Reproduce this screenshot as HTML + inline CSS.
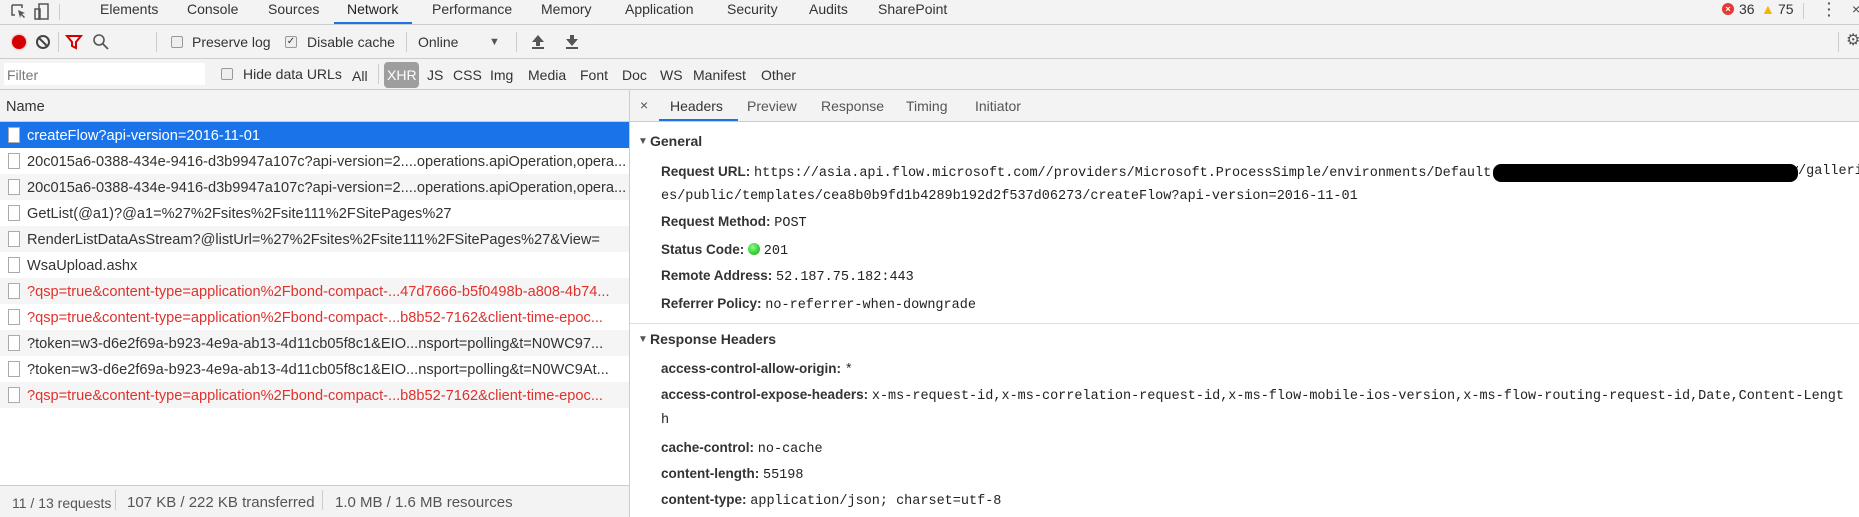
<!DOCTYPE html>
<html><head><meta charset="utf-8"><style>
*{margin:0;padding:0;box-sizing:border-box}
body{width:1859px;height:517px;overflow:hidden;background:#fff;font-family:"Liberation Sans",sans-serif;font-size:14px;color:#333;position:relative}
.a{position:absolute;white-space:nowrap;line-height:18px}
.bar{position:absolute;left:0;width:1859px;background:#f3f3f3}
.hl{position:absolute;height:1px;background:#ccc}
.vl{position:absolute;width:1px;background:#ccc}
.cb{position:absolute;width:12px;height:12px;border:1px solid #999;border-radius:2px;background:#eee}
.row{position:absolute;left:0;width:629px;height:26px;font-size:14.6px}
.row .f{position:absolute;left:8px;top:5px;width:12px;height:16px;border:1px solid #aaa;background:#fff}
.row .t{position:absolute;left:27px;top:5px;line-height:18px;white-space:nowrap}
.red{color:#e0312d}
.k{position:absolute;left:661px;font-weight:bold;font-size:13.5px;white-space:nowrap;line-height:18px;color:#333}
.k span{font-weight:normal;font-family:"Liberation Mono",monospace;font-size:13.5px;color:#222}
.m{font-family:"Liberation Mono",monospace;font-size:13.5px;color:#222}
</style></head><body>
<!-- top tab bar -->
<div class="bar" style="top:0;height:24px"></div>
<div class="hl" style="top:24px;left:0;width:1859px"></div>
<svg class="a" style="left:9px;top:2px" width="20" height="20" viewBox="0 0 20 20"><path d="M3 3h10v3M3 3v10h3" fill="none" stroke="#555" stroke-width="1.5"/><path d="M9 8l7 3-3 1 3 3-1 1-3-3-1 3z" fill="#555"/></svg>
<svg class="a" style="left:33px;top:2px" width="20" height="20" viewBox="0 0 20 20"><rect x="6" y="2" width="9" height="15" fill="none" stroke="#555" stroke-width="1.5"/><rect x="2" y="7" width="5" height="10" fill="none" stroke="#555" stroke-width="1.5"/></svg>
<div class="vl" style="left:59px;top:4px;height:16px"></div>
<div class="a" style="left:100px;top:0;color:#333">Elements</div>
<div class="a" style="left:187px;top:0">Console</div>
<div class="a" style="left:268px;top:0">Sources</div>
<div class="a" style="left:347px;top:0;color:#222">Network</div>
<div style="position:absolute;left:334px;top:22px;width:78px;height:2px;background:#1a73e8"></div>
<div class="a" style="left:432px;top:0">Performance</div>
<div class="a" style="left:541px;top:0">Memory</div>
<div class="a" style="left:625px;top:0">Application</div>
<div class="a" style="left:727px;top:0">Security</div>
<div class="a" style="left:809px;top:0">Audits</div>
<div class="a" style="left:878px;top:0">SharePoint</div>
<div class="a" style="left:1722px;top:3px;width:12px;height:12px;border-radius:50%;background:#e53935;color:#fff;font-size:9px;line-height:12px;text-align:center;font-weight:bold">×</div>
<div class="a" style="left:1739px;top:0">36</div>
<div class="a" style="left:1761px;top:0;color:#f4b400;font-size:14px">▲</div>
<div class="a" style="left:1778px;top:0">75</div>
<div class="vl" style="left:1803px;top:3px;height:16px"></div>
<div class="a" style="left:1827px;top:0;font-weight:bold;color:#555;line-height:6px;font-size:14px">·<br>·<br>·</div>
<div class="a" style="left:1852px;top:0;color:#444">×</div>
<!-- toolbar -->
<div class="bar" style="top:25px;height:33px"></div>
<div class="hl" style="top:58px;left:0;width:1859px"></div>
<div class="a" style="left:12px;top:35px;width:14px;height:14px;border-radius:50%;background:#d50000;box-shadow:0 0 2px #f66"></div>
<svg class="a" style="left:35px;top:34px" width="16" height="16" viewBox="0 0 16 16"><circle cx="8" cy="8" r="6" fill="none" stroke="#444" stroke-width="2"/><path d="M4 4l8 8" stroke="#444" stroke-width="2"/></svg>
<div class="vl" style="left:58px;top:32px;height:20px"></div>
<svg class="a" style="left:65px;top:33px" width="18" height="18" viewBox="0 0 18 18"><path d="M2 3h14l-5 6v6l-4 -2v-4z" fill="none" stroke="#d50000" stroke-width="2"/></svg>
<svg class="a" style="left:92px;top:33px" width="18" height="18" viewBox="0 0 18 18"><circle cx="7" cy="7" r="5" fill="none" stroke="#555" stroke-width="1.6"/><path d="M11 11l5 5" stroke="#555" stroke-width="1.8"/></svg>
<div class="vl" style="left:156px;top:32px;height:20px"></div>
<div class="cb" style="left:171px;top:36px"></div>
<div class="a" style="left:192px;top:33px">Preserve log</div>
<div class="cb" style="left:285px;top:36px;font-size:10px;line-height:10px;text-align:center;color:#333">✓</div>
<div class="a" style="left:307px;top:33px">Disable cache</div>
<div class="vl" style="left:406px;top:32px;height:20px"></div>
<div class="a" style="left:418px;top:33px">Online</div>
<div class="a" style="left:489px;top:33px;font-size:11px;color:#555">▼</div>
<div class="vl" style="left:516px;top:32px;height:20px"></div>
<svg class="a" style="left:531px;top:34px" width="14" height="16" viewBox="0 0 14 16"><path d="M7 1l6 7H9v4H5V8H1z" fill="#555"/><rect x="1" y="13" width="12" height="2" fill="#555"/></svg>
<svg class="a" style="left:565px;top:34px" width="14" height="16" viewBox="0 0 14 16"><path d="M7 12l6-7H9V1H5v4H1z" fill="#555"/><rect x="1" y="13" width="12" height="2" fill="#555"/></svg>
<div class="vl" style="left:1838px;top:32px;height:20px"></div>
<div class="a" style="left:1846px;top:32px;color:#555;font-size:16px">⚙</div>
<!-- filter row -->
<div class="bar" style="top:59px;height:30px"></div>
<div class="hl" style="top:89px;left:0;width:1859px"></div>
<div class="a" style="left:4px;top:63px;width:201px;height:22px;background:#fff"></div>
<div class="a" style="left:7px;top:66px;color:#777">Filter</div>
<div class="cb" style="left:221px;top:68px"></div>
<div class="a" style="left:243px;top:65px">Hide data URLs</div>
<div class="a" style="left:352px;top:67px">All</div>
<div class="vl" style="left:378px;top:64px;height:20px"></div>
<div class="a" style="left:384px;top:62px;width:35px;height:26px;background:#9e9e9e;border-radius:4px"></div>
<div class="a" style="left:387px;top:66px;color:#fff">XHR</div>
<div class="a" style="left:427px;top:66px">JS</div>
<div class="a" style="left:453px;top:66px">CSS</div>
<div class="a" style="left:490px;top:66px">Img</div>
<div class="a" style="left:528px;top:66px">Media</div>
<div class="a" style="left:580px;top:66px">Font</div>
<div class="a" style="left:622px;top:66px">Doc</div>
<div class="a" style="left:660px;top:66px">WS</div>
<div class="a" style="left:693px;top:66px">Manifest</div>
<div class="a" style="left:761px;top:66px">Other</div>
<!-- left panel -->
<div class="a" style="left:0;top:90px;width:629px;height:32px;background:#f3f3f3"></div>
<div class="hl" style="top:121px;left:0;width:629px"></div>
<div class="a" style="left:6px;top:98px;font-size:14.5px">Name</div>
<div class="vl" style="left:629px;top:90px;height:427px"></div>
<div class="row" style="top:122px;background:#1a73e8"><div class="f"></div><div class="t" style="color:#fff">createFlow?api-version=2016-11-01</div></div>
<div class="row" style="top:148px;background:#fff"><div class="f"></div><div class="t">20c015a6-0388-434e-9416-d3b9947a107c?api-version=2....operations.apiOperation,opera...</div></div>
<div class="row" style="top:174px;background:#f5f5f5"><div class="f"></div><div class="t">20c015a6-0388-434e-9416-d3b9947a107c?api-version=2....operations.apiOperation,opera...</div></div>
<div class="row" style="top:200px;background:#fff"><div class="f"></div><div class="t">GetList(@a1)?@a1=%27%2Fsites%2Fsite111%2FSitePages%27</div></div>
<div class="row" style="top:226px;background:#f5f5f5"><div class="f"></div><div class="t">RenderListDataAsStream?@listUrl=%27%2Fsites%2Fsite111%2FSitePages%27&amp;View=</div></div>
<div class="row" style="top:252px;background:#fff"><div class="f"></div><div class="t">WsaUpload.ashx</div></div>
<div class="row" style="top:278px;background:#f5f5f5"><div class="f"></div><div class="t red">?qsp=true&amp;content-type=application%2Fbond-compact-...47d7666-b5f0498b-a808-4b74...</div></div>
<div class="row" style="top:304px;background:#fff"><div class="f"></div><div class="t red">?qsp=true&amp;content-type=application%2Fbond-compact-...b8b52-7162&amp;client-time-epoc...</div></div>
<div class="row" style="top:330px;background:#f5f5f5"><div class="f"></div><div class="t">?token=w3-d6e2f69a-b923-4e9a-ab13-4d11cb05f8c1&amp;EIO...nsport=polling&amp;t=N0WC97...</div></div>
<div class="row" style="top:356px;background:#fff"><div class="f"></div><div class="t">?token=w3-d6e2f69a-b923-4e9a-ab13-4d11cb05f8c1&amp;EIO...nsport=polling&amp;t=N0WC9At...</div></div>
<div class="row" style="top:382px;background:#f5f5f5"><div class="f"></div><div class="t red">?qsp=true&amp;content-type=application%2Fbond-compact-...b8b52-7162&amp;client-time-epoc...</div></div>
<!-- status bar -->
<div class="a" style="left:0;top:486px;width:629px;height:31px;background:#f3f3f3"></div>
<div class="hl" style="top:485px;left:0;width:629px"></div>
<div class="a" style="left:12px;top:494px;color:#555;font-size:14px">11 / 13 requests</div>
<div class="vl" style="left:115px;top:490px;height:20px"></div>
<div class="a" style="left:127px;top:494px;color:#555;font-size:15px">107 KB / 222 KB transferred</div>
<div class="vl" style="left:322px;top:490px;height:20px"></div>
<div class="a" style="left:335px;top:494px;color:#555;font-size:15px">1.0 MB / 1.6 MB resources</div>
<!-- right panel -->
<div class="a" style="left:630px;top:90px;width:1229px;height:31px;background:#f3f3f3"></div>
<div class="hl" style="top:121px;left:630px;width:1229px"></div>
<div class="a" style="left:640px;top:96px;color:#555">×</div>
<div class="a" style="left:670px;top:97px;color:#333">Headers</div>
<div style="position:absolute;left:659px;top:119px;width:79px;height:2px;background:#1a73e8"></div>
<div class="a" style="left:747px;top:97px;color:#555">Preview</div>
<div class="a" style="left:821px;top:97px;color:#555">Response</div>
<div class="a" style="left:906px;top:97px;color:#555">Timing</div>
<div class="a" style="left:975px;top:97px;color:#555">Initiator</div>
<div class="a" style="left:638px;top:133px;font-size:10px;color:#555">▼</div>
<div class="a" style="left:650px;top:132px;font-weight:bold;font-size:14px">General</div>
<div class="k" style="top:163px">Request URL: <span>https://asia.api.flow.microsoft.com//providers/Microsoft.ProcessSimple/environments/Default-xxxxxxxx-xxxx-xxxx-xxxx-xxxxxxxxxxxx/galleri</span></div>
<div class="a" style="left:1493px;top:164px;width:305px;height:18px;background:#000;border-radius:8px"></div>
<div class="a" style="left:1798px;top:163px;width:61px;height:20px;background:#fff"></div>
<div class="a m" style="left:1798px;top:163px">/galleri</div>
<div class="a m" style="left:661px;top:188px">es/public/templates/cea8b0b9fd1b4289b192d2f537d06273/createFlow?api-version=2016-11-01</div>
<div class="k" style="top:213px">Request Method: <span>POST</span></div>
<div class="k" style="top:241px">Status Code: <span style="display:inline-block;width:12px;height:12px;border-radius:50%;background:radial-gradient(circle at 40% 35%,#8f8,#0a0);vertical-align:-1px"></span> <span>201</span></div>
<div class="k" style="top:267px">Remote Address: <span>52.187.75.182:443</span></div>
<div class="k" style="top:295px">Referrer Policy: <span>no-referrer-when-downgrade</span></div>
<div class="hl" style="top:323px;left:630px;width:1229px;background:#ddd"></div>
<div class="a" style="left:638px;top:331px;font-size:10px;color:#555">▼</div>
<div class="a" style="left:650px;top:330px;font-weight:bold;font-size:14px">Response Headers</div>
<div class="k" style="top:360px">access-control-allow-origin: <span>*</span></div>
<div class="k" style="top:386px">access-control-expose-headers: <span>x-ms-request-id,x-ms-correlation-request-id,x-ms-flow-mobile-ios-version,x-ms-flow-routing-request-id,Date,Content-Lengt</span></div>
<div class="a m" style="left:661px;top:412px">h</div>
<div class="k" style="top:439px">cache-control: <span>no-cache</span></div>
<div class="k" style="top:465px">content-length: <span>55198</span></div>
<div class="k" style="top:491px">content-type: <span>application/json; charset=utf-8</span></div>
</body></html>
